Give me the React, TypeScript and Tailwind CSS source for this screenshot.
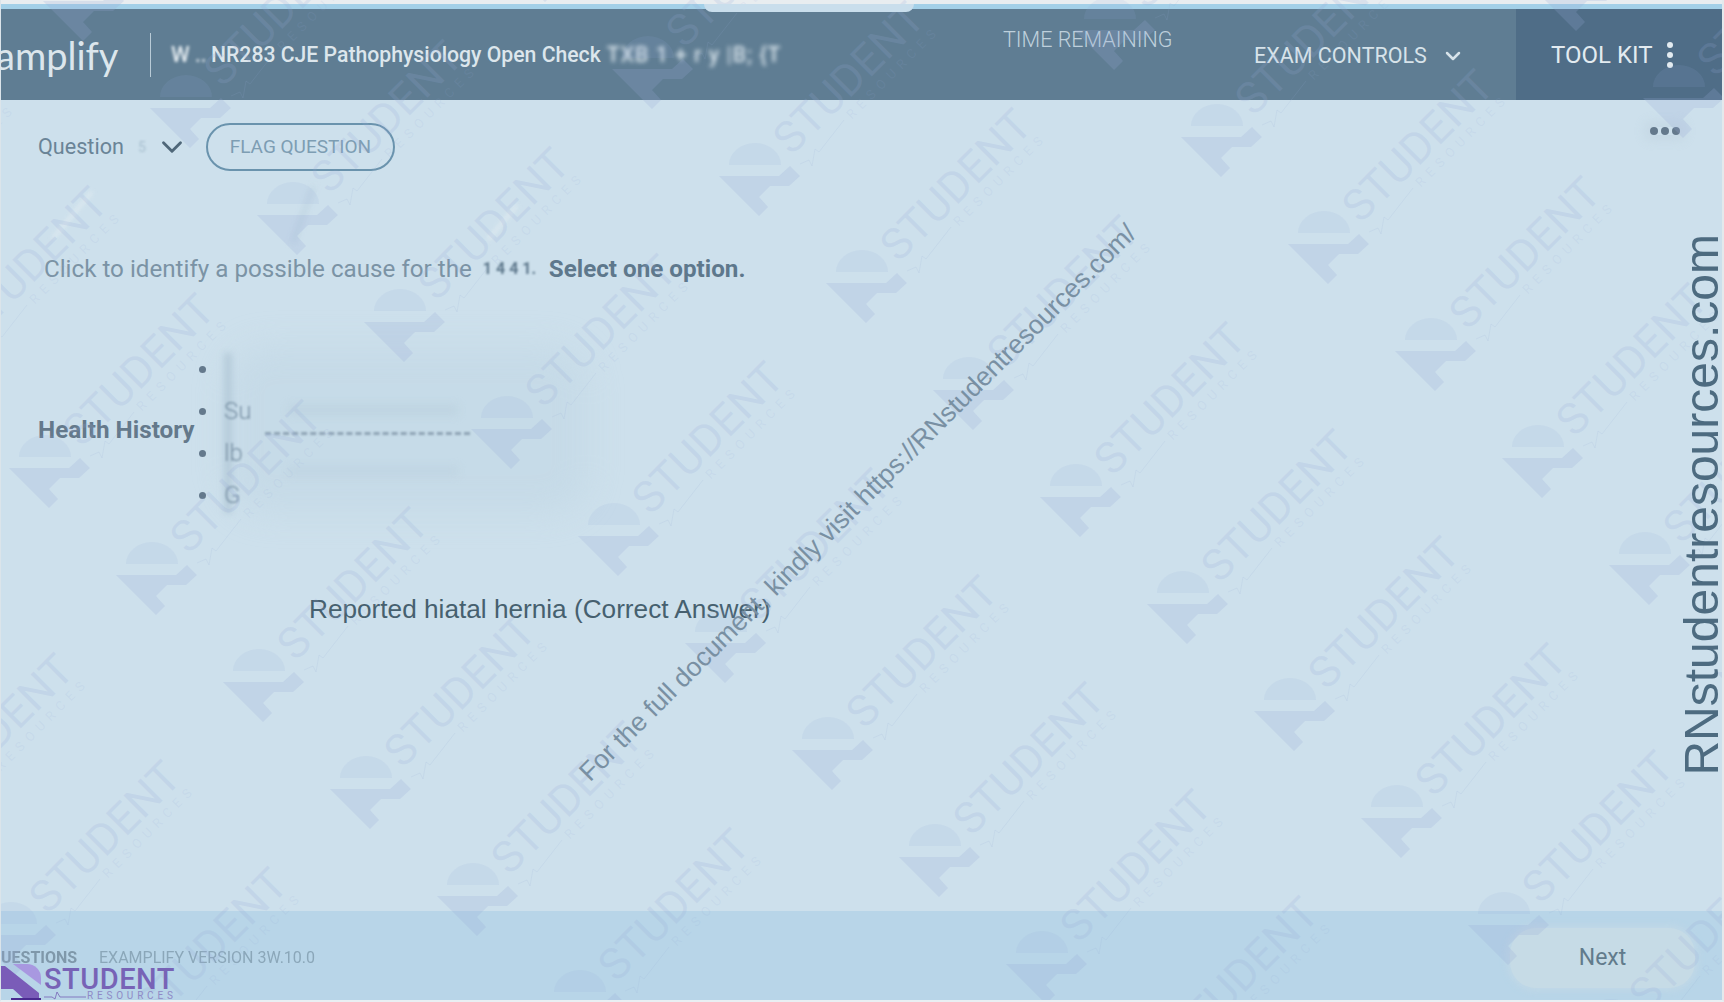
import { ChevronDown } from "lucide-react";

const DOME = "M10 -11 A 26 22 0 0 1 62 -11 Z";
const MARK = "0,0 60,0 71,-10 81,0 70,10 51,10 40,21 49,31 40,40";

// watermark logos sit on a skewed lattice, measured from the screenshot
const spots: { x: number; y: number }[] = [];
for (let i = -12; i <= 12; i++) {
  for (let j = -5; j <= 3; j++) {
    const x = 1287 + i * 107 + j * 462;
    const y = 244 + i * 107 - j * 39;
    if (x > -220 && x < 1740 && y > -60 && y < 1090) spots.push({ x, y });
  }
}

function Watermark({ x, y }: { x: number; y: number }) {
  return (
    <div className="absolute h-0 w-0" style={{ left: x, top: y }}>
      <svg className="absolute left-0 top-[-60px] overflow-visible" width="130" height="100" viewBox="0 -60 130 100">
        <path d={DOME} fill="#96aad7" opacity="0.13" />
        <polygon points={MARK} fill="#96aad7" opacity="0.22" />
        <path d="M81 -12L90 -16L93 -10L96 -27L100 -24L125 -56" fill="none" stroke="#96aad7" strokeOpacity="0.14" strokeWidth="1" />
      </svg>
      <span className="absolute left-[62px] top-[-52px] origin-left -rotate-45 whitespace-nowrap font-['Roboto',sans-serif] text-[44px] leading-[44px] text-[#96aad7]/[0.19]">
        STUDENT
      </span>
      <span className="absolute left-[130px] top-[-66px] origin-left -rotate-45 whitespace-nowrap font-['Roboto',sans-serif] text-[13px] leading-[14px] tracking-[6px] text-[#96aad7]/[0.13]">
        RESOURCES
      </span>
    </div>
  );
}

function Smudge({ className, children }: { className: string; children: string }) {
  return <span className={className}>{children}</span>;
}

export default function App() {
  return (
    <div className="relative flex h-screen w-screen flex-col overflow-hidden border-b-2 border-l border-r-2 border-b-[#e9eff3] border-l-[#dbe4ea] border-r-[#e4e9ec] bg-[#cde0ec] font-['Roboto',sans-serif]">
      <div className="h-1 shrink-0 bg-[#e8edf0]" />
      <div className="h-[5px] shrink-0 bg-[#a3d0e8]" />

      {/* header */}
      <header className="flex h-[91px] shrink-0 items-stretch bg-[#5f7d93]">
        <div className="flex w-[1002px] shrink-0 items-center overflow-hidden">
          <span className="ml-[-5px] w-[154px] font-['Lato',sans-serif] text-[38px] leading-none text-[#dce6ec]">amplify</span>
          <div className="h-[44px] w-px bg-[#b9cbd7]" />
          <div className="ml-[20px] flex items-center whitespace-nowrap text-[21.2px] font-medium text-[#dce6ec]">
            <Smudge className="w-[40px] text-[#e7eef2] blur-[1.5px]">W ..</Smudge>
            <span>NR283 CJE Pathophysiology Open Check</span>
            <Smudge className="ml-[6px] tracking-[1px] text-[#d7e3ea] blur-[2px]">TXB 1 + r y |B; {"{"}T</Smudge>
          </div>
        </div>
        <div className="w-[251px] shrink-0 pt-[18px] text-[21.5px] font-light leading-[26px] text-[#bed0dc]">TIME REMAINING</div>
        <div className="flex w-[262px] shrink-0 items-center pt-[3px] text-[21.5px] text-[#d7e3ea]">
          EXAM CONTROLS
          <ChevronDown className="ml-[14px]" size={24} strokeWidth={2.5} />
        </div>
        <div className="flex flex-1 items-center bg-[#4f6d87] pl-[35px] text-[24px] text-[#e3ebf0]">
          TOOL KIT
          <div className="ml-[15px] flex flex-col gap-[4px]">
            <span className="h-[6px] w-[6px] rounded-full bg-[#e3ebf0]" />
            <span className="h-[6px] w-[6px] rounded-full bg-[#e3ebf0]" />
            <span className="h-[6px] w-[6px] rounded-full bg-[#e3ebf0]" />
          </div>
        </div>
      </header>

      {/* question body */}
      <main className="relative flex min-h-0 flex-1 flex-col pl-[37px]">
        {/* scan smears under the toolbar */}
        <div className="absolute left-[70px] top-[85px] h-[60px] w-[3px] rotate-[40deg] bg-[#dfeaf1] blur-[2px]" />
        <div className="absolute left-[300px] top-[85px] h-[60px] w-[4px] rotate-[20deg] bg-[#bdd2e0] blur-[3px]" />
        <div className="absolute left-[500px] top-[100px] h-[45px] w-[3px] rotate-[40deg] bg-[#dfeaf1] blur-[2px]" />

        <div className="relative mt-[23px] flex h-[48px] items-center">
          <span className="text-[21.6px] text-[#6a8497]">Question</span>
          <Smudge className="ml-[14px] w-[8px] text-[14px] text-[#a8bfcf] blur-[1px]">5</Smudge>
          <ChevronDown className="ml-[9px] text-[#4f6779]" size={34} strokeWidth={2} />
          <button className="ml-[17px] flex h-[48px] w-[189px] items-center justify-center rounded-full border-2 border-[#6a93ad] text-[19px] text-[#7d9db3]">
            FLAG QUESTION
          </button>
          <div className="mb-[32px] ml-auto mr-[42px] flex gap-[3px] rounded-full shadow-[0_0_10px_6px_rgba(195,213,226,0.7)]">
            <span className="h-[8px] w-[8px] rounded-full bg-[#64798c]" />
            <span className="h-[8px] w-[8px] rounded-full bg-[#64798c]" />
            <span className="h-[8px] w-[8px] rounded-full bg-[#64798c]" />
          </div>
        </div>

        <p className="relative ml-[6px] mt-[83px] flex h-[30px] items-center whitespace-nowrap text-[24.2px] text-[#7b93a5]">
          Click to identify a possible cause for the
          <Smudge className="ml-[11px] w-[56px] text-[16px] font-bold text-[#5e788c] blur-[0.8px]">1 4 4 1.</Smudge>
          <strong className="ml-[10px] font-bold text-[#5e788c]">Select one option.</strong>
        </p>

        <section className="relative mt-[61px] flex h-[170px] items-center">
          {/* redacted answers, drawn under the list */}
          <div className="absolute left-[190px] top-[2px] h-[165px] w-[360px] rounded-[40px] bg-[#c0d6e4]/50 blur-[16px]" />
          <div className="absolute left-[227px] top-[87px] h-[3px] w-[205px] border-t-[3px] border-dashed border-[#8fa4b5] blur-[0.8px]" />
          <div className="absolute left-[186px] top-[8px] h-[160px] w-[8px] bg-[#a9c0d0]/60 blur-[3px]" />
          <div className="absolute left-[250px] top-[60px] h-[10px] w-[170px] bg-[#adc3d2]/30 blur-[5px]" />
          <div className="absolute left-[250px] top-[122px] h-[8px] w-[170px] bg-[#afc5d4]/30 blur-[5px]" />
          <h3 className="relative w-[161px] text-[24.3px] font-bold text-[#64798b]">Health History</h3>
          <ul className="relative mt-[4px] flex h-[168px] flex-col">
            {["", "Su", "lb", "G"].map((t, i) => (
              <li key={i} className="flex h-[42px] items-center">
                <span className="h-[7px] w-[7px] rounded-full bg-[#64798c]" />
                <span className="ml-[18px] text-[24px] font-light text-[#7a92a5] blur-[0.8px]">{t}</span>
              </li>
            ))}
          </ul>
        </section>

        <p className="relative ml-[271px] mt-[79px] font-['Liberation_Sans',sans-serif] text-[26.2px] leading-[30px] text-[#46606f]">
          Reported hiatal hernia (Correct Answer)
        </p>
      </main>

      {/* footer */}
      <footer className="flex h-[89px] shrink-0 items-center bg-[#b8d5e8] pr-[27px] pt-[5px]">
        <span className="w-[98px] text-[16px] font-bold leading-none text-[#7f98aa] blur-[0.4px]">UESTIONS</span>
        <span className="text-[16px] leading-none text-[#8ba7b9] blur-[0.4px]">EXAMPLIFY VERSION 3W.10.0</span>
        <button className="ml-auto flex h-[60px] w-[185px] items-center justify-center rounded-[26px] bg-[#c6dbe6] text-[23px] text-[#627b8c] shadow-[0_0_6px_3px_rgba(198,219,230,0.6)]">
          Next
        </button>
      </footer>

      {/* watermark layer */}
      <div className="pointer-events-none absolute inset-0">
        {spots.map((s) => (
          <Watermark key={`${s.x}-${s.y}`} x={s.x} y={s.y} />
        ))}
      </div>

      {/* notch at the top of the page */}
      <div className="absolute left-[703px] top-1 h-2 w-[210px] rounded-b-[18px] bg-[#c9deec]" />

      <span className="absolute left-[857px] top-[503px] -translate-x-1/2 -translate-y-1/2 -rotate-45 whitespace-nowrap font-['Liberation_Sans',sans-serif] text-[26.4px] text-[#7990a3]">
        For the full document, kindly visit https://RNstudentresources.com/
      </span>

      <span className="absolute right-[-4px] top-[234px] rotate-180 whitespace-nowrap font-['Liberation_Sans',sans-serif] text-[48px] leading-[48px] text-[#4d6b80] [writing-mode:vertical-rl]">
        RNstudentresources.com
      </span>

      {/* brand logo, bottom left */}
      <div className="absolute bottom-0 left-0 flex h-[39px] items-start">
        <svg width="42" height="39" viewBox="0 0 42 39">
          <path d="M12 3H26A14 14 0 0 1 40 17V24Z" fill="#a898e0" />
          <polygon points="0,5 4,5 38,32 38,37 22,37 12,28 0,28" fill="#7a5cb8" />
          <polygon points="10,37 40,37 40,39 10,39" fill="#4a2a90" />
        </svg>
        <div className="ml-[1px] mt-[7px] flex flex-col">
          <span className="text-[29px] font-medium leading-[23px] tracking-[0.5px] text-[#7763b6]">STUDENT</span>
          <div className="flex items-center">
            <svg width="42" height="10" viewBox="0 0 42 10">
              <path d="M0 6H8L11 8L13 1L16 6H42" fill="none" stroke="#7763b6" strokeWidth="0.8" />
            </svg>
            <span className="ml-[1px] text-[10px] leading-[10px] tracking-[3.8px] text-[#8f8ac6]">RESOURCES</span>
          </div>
        </div>
      </div>
    </div>
  );
}
